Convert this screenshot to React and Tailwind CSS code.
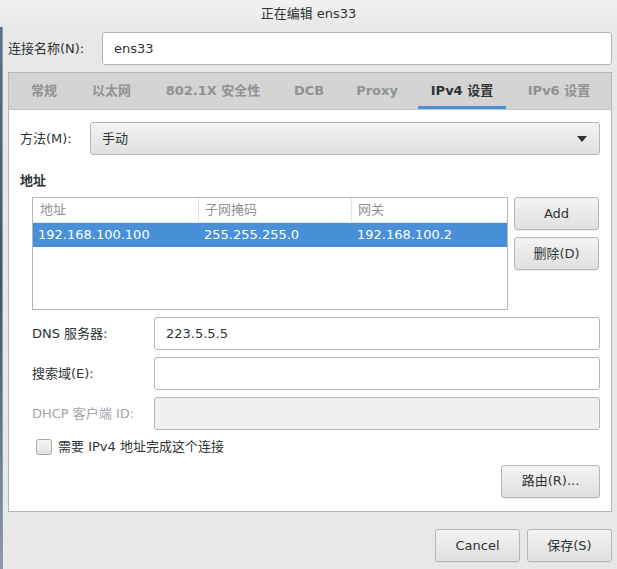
import { useState } from "react";

const tabs = [
  { label: "常规", w: "w-[52px]" },
  { label: "以太网", w: "w-[65px]" },
  { label: "802.1X 安全性", w: "w-[120px]" },
  { label: "DCB", w: "w-[54px]" },
  { label: "Proxy", w: "w-[64px]" },
  { label: "IPv4 设置", w: "w-[88px]" },
  { label: "IPv6 设置", w: "w-[88px]" },
];

function GtkButton({ children, className = "" }) {
  return (
    <button
      className={
        "h-[33px] rounded-[3px] border border-[#b6b6b6] bg-gradient-to-b from-[#f4f4f4] to-[#e0e0e0] text-[13px] text-[#2e3436] shadow-[0_1px_0_rgba(0,0,0,0.06)] " +
        className
      }
    >
      {children}
    </button>
  );
}

function Field({ value, disabled }) {
  return (
    <div
      className={
        "flex-1 h-[33px] rounded-[3px] border border-[#b6b6b6] flex items-center px-[11px] text-[13px] text-[#2e3436] " +
        (disabled ? "bg-[#f0f0f0]" : "bg-white")
      }
    >
      {value}
    </div>
  );
}

export default function App() {
  const [active] = useState(5);
  const [checked, setChecked] = useState(false);

  return (
    <div className="w-[617px] h-[569px] overflow-hidden flex bg-[#e8e8e8] font-['DejaVu_Sans','Noto_Sans_CJK_SC',sans-serif]">
      {/* bit of desktop behind the dialog */}
      <div className="w-[2px] bg-gradient-to-b from-[#5a7896] via-[#3c5470] to-[#8a9aab]" />
      <div className="flex-1 flex flex-col border-l border-[#9a9a9a]">
        {/* title bar */}
        <div className="h-[27px] shrink-0 flex items-center justify-center bg-gradient-to-b from-[#f2f2f2] to-[#e8e8e8] text-[13px] text-[#2e3436] -ml-[3px]">
          正在编辑 ens33
        </div>

        <div className="flex-1 flex flex-col pl-[5px] pr-[5px]">
          {/* connection name */}
          <div className="mt-[5px] flex items-center">
            <span className="w-[94px] text-[13px] text-[#2e3436]">连接名称(N):</span>
            <Field value="ens33" />
          </div>

          {/* notebook */}
          <div className="mt-[7px] h-[440px] border border-[#b6b6b6] flex flex-col">
            <div className="h-[37px] shrink-0 bg-[#d4d4d4] border-b border-[#c4c4c4] flex items-stretch pl-[9px] gap-[9px]">
              {tabs.map((t, i) => (
                <div
                  key={t.label}
                  className={
                    t.w +
                    " pt-[3px] flex items-center justify-center whitespace-nowrap text-[13px] font-bold border-b-[3px] " +
                    (i === active ? "text-[#2e3436] border-[#4a90d9]" : "text-[#8f9293] border-transparent")
                  }
                >
                  {t.label}
                </div>
              ))}
            </div>

            <div className="flex-1 bg-white pl-[11px] pr-[11px] flex flex-col">
              {/* method */}
              <div className="mt-[12px] flex items-center">
                <span className="w-[70px] text-[13px] text-[#2e3436]">方法(M):</span>
                <div className="flex-1 h-[33px] rounded-[3px] border border-[#b6b6b6] bg-gradient-to-b from-[#f4f4f4] to-[#e0e0e0] flex items-center justify-between pl-[11px] pr-[12px] text-[13px] text-[#2e3436]">
                  <span>手动</span>
                  <svg width="10" height="6" viewBox="0 0 10 6">
                    <path d="M0 0 L10 0 L5 6 Z" fill="#2e3436" />
                  </svg>
                </div>
              </div>

              <div className="mt-[17px] text-[13px] font-bold text-[#2e3436] leading-[17px]">地址</div>

              {/* address table + buttons */}
              <div className="mt-[8px] ml-[12px] flex gap-[6px]">
                <div className="w-[476px] h-[113px] border border-[#b6b6b6] bg-white flex flex-col">
                  <div className="h-[25px] flex text-[13px] text-[#8f9293] border-b border-[#e4e4e4]">
                    <div className="w-[166px] pl-[7px] flex items-center border-r border-[#e4e4e4]">地址</div>
                    <div className="w-[153px] pl-[6px] flex items-center border-r border-[#e4e4e4]">子网掩码</div>
                    <div className="flex-1 pl-[6px] flex items-center">网关</div>
                  </div>
                  <div className="h-[24px] flex text-[13px] text-white bg-[#4a90d9]">
                    <div className="w-[166px] pl-[5px] flex items-center">192.168.100.100</div>
                    <div className="w-[153px] pl-[5px] flex items-center">255.255.255.0</div>
                    <div className="flex-1 pl-[5px] flex items-center">192.168.100.2</div>
                  </div>
                </div>
                <div className="w-[85px] flex flex-col gap-[7px]">
                  <GtkButton>Add</GtkButton>
                  <GtkButton>删除(D)</GtkButton>
                </div>
              </div>

              {/* dns / search / dhcp */}
              <div className="mt-[7px] ml-[12px] flex flex-col gap-[7px]">
                <div className="flex items-center">
                  <span className="w-[122px] text-[13px] text-[#2e3436]">DNS 服务器:</span>
                  <Field value="223.5.5.5" />
                </div>
                <div className="flex items-center">
                  <span className="w-[122px] text-[13px] text-[#2e3436]">搜索域(E):</span>
                  <Field value="" />
                </div>
                <div className="flex items-center">
                  <span className="w-[122px] text-[13px] text-[#a3a6a7]">DHCP 客户端 ID:</span>
                  <Field value="" disabled />
                </div>
              </div>

              {/* checkbox */}
              <label className="mt-[7px] ml-[16px] flex items-center gap-[6px] cursor-pointer">
                <input
                  type="checkbox"
                  checked={checked}
                  onChange={(e) => setChecked(e.target.checked)}
                  className="appearance-none w-[16px] h-[16px] rounded-[3px] border border-[#a8a8a8] bg-gradient-to-b from-[#f6f6f6] to-[#e2e2e2]"
                />
                <span className="text-[13px] text-[#2e3436]">需要 IPv4 地址完成这个连接</span>
              </label>

              <div className="mt-[8px] flex justify-end">
                <GtkButton className="w-[99px]">路由(R)...</GtkButton>
              </div>
            </div>
          </div>

          {/* dialog buttons */}
          <div className="mt-[17px] flex justify-end gap-[7px]">
            <GtkButton className="w-[85px]">Cancel</GtkButton>
            <GtkButton className="w-[85px]">保存(S)</GtkButton>
          </div>
        </div>
      </div>
    </div>
  );
}
